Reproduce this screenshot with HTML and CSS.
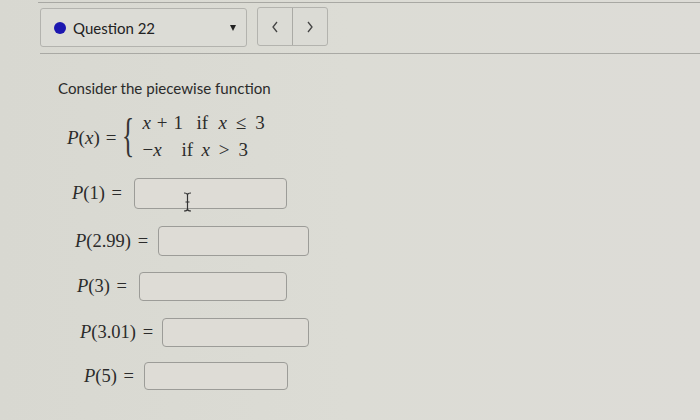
FILE: index.html
```html
<!DOCTYPE html>
<html>
<head>
<meta charset="utf-8">
<link rel="stylesheet" href="styles.css">
</head>
<body>
<div class="page">
  <div class="topline"></div>
  <div class="header">
    <div class="select">
      <span class="dot"></span>
      <span class="qtitle">Question 22</span>
      <span class="caret"></span>
    </div>
    <div class="nav">
      <div class="navbtn">
        <svg width="10" height="14" viewBox="0 0 10 14"><path d="M7 2 L3 7 L7 12" fill="none" stroke="#444" stroke-width="1.3"/></svg>
      </div>
      <div class="navbtn">
        <svg width="10" height="14" viewBox="0 0 10 14"><path d="M3 2 L7 7 L3 12" fill="none" stroke="#444" stroke-width="1.3"/></svg>
      </div>
    </div>
  </div>
  <div class="rule"></div>

  <div class="content">
    <p class="intro">Consider the piecewise function</p>

    <div class="def">
      <span class="lhs"><i>P</i>(<i>x</i>)<span class="eq">=</span></span>
      <span class="brace">{</span>
      <div class="cases">
        <div class="case"><span class="a1"><i>x</i><span class="op">+</span>1</span><span class="a2">if</span><span class="a3"><i>x</i><span class="rel">≤</span>3</span></div>
        <div class="case"><span class="b1">−<i>x</i></span><span class="b2">if</span><span class="b3"><i>x</i><span class="rel">&gt;</span>3</span></div>
      </div>
    </div>

    <div class="row r1">
      <span class="label"><i>P</i>(1) <span class="eq2">=</span></span>
      <span class="box w1">
        <svg class="ibeam" width="9" height="20" viewBox="0 0 9 20"><path d="M1 1 Q4.5 1 4.5 3 Q4.5 1 8 1 M4.5 3 L4.5 17 M1 19 Q4.5 19 4.5 17 Q4.5 19 8 19 M2.5 10 L6.5 10" fill="none" stroke="#333" stroke-width="1.2"/></svg>
      </span>
    </div>
    <div class="row r2">
      <span class="label"><i>P</i>(2.99) <span class="eq2">=</span></span>
      <span class="box w2"></span>
    </div>
    <div class="row r3">
      <span class="label"><i>P</i>(3) <span class="eq2">=</span></span>
      <span class="box w3"></span>
    </div>
    <div class="row r4">
      <span class="label"><i>P</i>(3.01) <span class="eq2">=</span></span>
      <span class="box w4"></span>
    </div>
    <div class="row r5">
      <span class="label"><i>P</i>(5) <span class="eq2">=</span></span>
      <span class="box w5"></span>
    </div>
  </div>
</div>
</body>
</html>
```

FILE: styles.css
```css
html, body {
  margin: 0;
  padding: 0;
}
body {
  width: 700px;
  height: 420px;
  overflow: hidden;
  background: linear-gradient(90deg, #d8d8d1 0%, #dcdcd5 50%, #dddcd7 100%);
  font-family: Lato, "Noto Sans", sans-serif;
  color: #2a2a2a;
}
.page {
  position: relative;
  height: 420px;
}
.topline {
  margin-top: 2px;
  margin-left: 38px;
  height: 1px;
  background: #a8a8a3;
}
.header {
  display: flex;
  align-items: flex-start;
  gap: 10px;
  margin-top: 5px;
  padding-left: 40px;
}
.select {
  box-sizing: border-box;
  width: 207px;
  height: 39px;
  border: 1px solid #b3b3ae;
  border-radius: 3px;
  background: #dcdcd6;
  display: flex;
  align-items: center;
  padding-left: 13px;
}
.dot {
  width: 12px;
  height: 12px;
  border-radius: 50%;
  background: #1c17b0;
  margin-right: 7px;
}
.qtitle {
  font-size: 15px;
  color: #222;
  flex: 1;
}
.caret {
  width: 0;
  height: 0;
  border-left: 3.5px solid transparent;
  border-right: 3.5px solid transparent;
  border-top: 6px solid #222;
  margin-right: 10px;
}
.nav {
  box-sizing: border-box;
  display: flex;
  width: 71px;
  height: 39px;
  border: 1px solid #b3b3ae;
  border-radius: 3px;
  margin-top: -1px;
  background: #dbdbd5;
}
.navbtn {
  flex: 1;
  display: flex;
  align-items: center;
  justify-content: center;
}
.navbtn + .navbtn {
  border-left: 1px solid #aaaaa5;
}
.rule {
  margin-top: 6px;
  margin-left: 40px;
  height: 1px;
  background: #a9a9a4;
}
.content {
  padding-left: 58px;
}
.intro {
  margin: 24px 0 0 0;
  font-size: 15.1px;
  color: #2b2b2b;
  line-height: 20px;
}
.def {
  display: flex;
  align-items: center;
  margin-top: 18px;
  margin-left: 9px;
  font-family: "Liberation Serif", serif;
  color: #2b2b2b;
}
.lhs {
  font-size: 19px;
  margin-bottom: 2px;
}
.eq {
  margin-left: 6px;
}
.brace {
  font-size: 46px;
  font-weight: 100;
  line-height: 46px;
  margin-left: 6px;
  margin-top: -6px;
  transform: scaleX(0.55);
  transform-origin: left center;
  width: 12px;
  color: #333;
}
.cases {
  display: flex;
  flex-direction: column;
  gap: 5px;
  font-size: 19px;
  line-height: 22px;
  margin-left: 8px;
  margin-top: -4px;
}
.case {
  display: flex;
  white-space: nowrap;
}
.op {
  margin: 0 6px;
}
.rel {
  margin: 0 9px;
}
.a1 { width: 54px; }
.a2 { width: 22px; }
.b1 { width: 39px; }
.b2 { width: 20px; }
.row {
  display: flex;
  align-items: center;
  font-family: "Liberation Serif", serif;
  font-size: 18.5px;
  color: #2b2b2b;
}
.label {
  white-space: nowrap;
}
.eq2 {
  margin-left: 2px;
}
.box {
  position: relative;
  box-sizing: border-box;
  display: block;
  height: 31px;
  border: 1.5px solid #9c9c98;
  border-radius: 4px;
  background: #dedcd6;
}
.ibeam {
  position: absolute;
  left: 48px;
  top: 13px;
}
.r1 { margin-top: 17px; margin-left: 14px; }
.r1 .label { width: 62px; }
.w1 { width: 153px; }
.r2 { margin-top: 17px; margin-left: 17px; }
.r2 .label { width: 83px; }
.w2 { width: 151px; height: 30px; }
.r3 { margin-top: 16px; margin-left: 19px; }
.r3 .label { width: 62px; }
.w3 { width: 148px; height: 29px; }
.r4 { margin-top: 17px; margin-left: 22px; }
.r4 .label { width: 82px; }
.w4 { width: 147px; height: 29px; }
.r5 { margin-top: 15px; margin-left: 26px; }
.r5 .label { width: 60px; }
.w5 { width: 144px; height: 28px; }
```
